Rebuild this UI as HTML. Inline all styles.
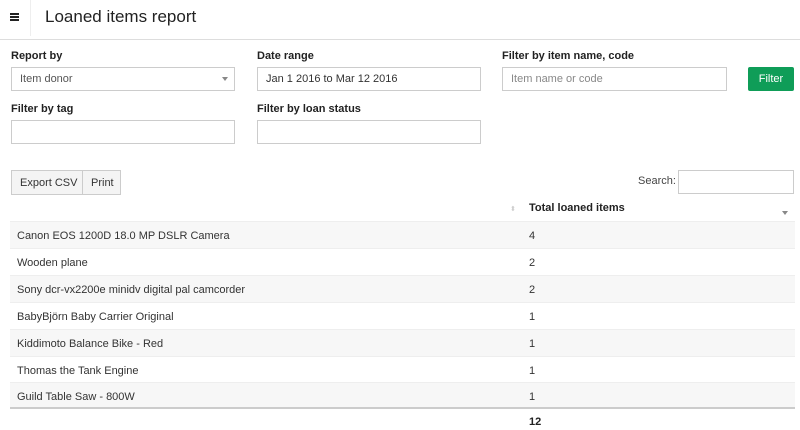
<!DOCTYPE html>
<html><head><style>
*{box-sizing:border-box;margin:0;padding:0}
body{width:800px;height:430px;overflow:hidden;background:#fff;font-family:"Liberation Sans",sans-serif;font-size:11px;color:#333;position:relative}
.a{position:absolute;white-space:nowrap}
.top{left:0;top:0;width:800px;height:40px;border-bottom:1px solid #ddd}
.lbl{font-weight:bold;font-size:11px;color:#222}
.inp{border:1px solid #ccc;height:24px;background:#fff;font-size:11px;padding:5px 8px;color:#555}
.btn{border:1px solid #ccc;background:#f4f4f4;height:25px;font-size:11px;padding:6px 8px;color:#333}
.row{left:10px;width:785px;height:27px;border-top:1px solid #eee;font-size:11px;padding:8px 7px}
.row span{position:absolute;left:519px;top:8px}
.g{background:#f7f7f7}
</style></head><body>
<div class="a top"></div>
<div class="a" style="left:30px;top:0;width:1px;height:36px;background:#eee"></div>
<div class="a" style="left:10px;top:13px;width:9px;height:2px;background:#222;box-shadow:0 3px 0 #222,0 6px 0 #222"></div>
<div class="a" style="left:45px;top:7px;font-size:17px;color:#222">Loaned items report</div>

<div class="a lbl" style="left:11px;top:50px">Report by</div>
<div class="a inp" style="left:11px;top:67px;width:224px">Item donor</div>
<div class="a" style="left:222px;top:77px;border:3px solid transparent;border-top:4px solid #888"></div>
<div class="a lbl" style="left:257px;top:50px">Date range</div>
<div class="a inp" style="left:257px;top:67px;width:224px;color:#333">Jan 1 2016 to Mar 12 2016</div>
<div class="a lbl" style="left:502px;top:50px">Filter by item name, code</div>
<div class="a inp" style="left:502px;top:67px;width:225px;color:#888">Item name or code</div>
<div class="a" style="left:748px;top:67px;width:46px;height:24px;background:#0f9d58;border-radius:2px;color:#fff;font-size:11px;text-align:center;line-height:24px">Filter</div>

<div class="a lbl" style="left:11px;top:103px">Filter by tag</div>
<div class="a inp" style="left:11px;top:120px;width:224px"></div>
<div class="a lbl" style="left:257px;top:103px">Filter by loan status</div>
<div class="a inp" style="left:257px;top:120px;width:224px"></div>

<div class="a btn" style="left:11px;top:170px;width:72px">Export CSV</div>
<div class="a btn" style="left:82px;top:170px;width:39px">Print</div>
<div class="a" style="left:638px;top:175px;color:#444">Search:</div>
<div class="a inp" style="left:678px;top:170px;width:116px"></div>

<div class="a" style="left:510px;top:205px;font-size:7px;color:#ccc">⬍</div>
<div class="a lbl" style="left:529px;top:202px">Total loaned items</div>
<div class="a" style="left:782px;top:211px;border:3px solid transparent;border-top:4px solid #888"></div>

<div class="a row g" style="top:221px">Canon EOS 1200D 18.0 MP DSLR Camera<span>4</span></div>
<div class="a row" style="top:248px">Wooden plane<span>2</span></div>
<div class="a row g" style="top:275px">Sony dcr-vx2200e minidv digital pal camcorder<span>2</span></div>
<div class="a row" style="top:302px">BabyBjörn Baby Carrier Original<span>1</span></div>
<div class="a row g" style="top:329px">Kiddimoto Balance Bike - Red<span>1</span></div>
<div class="a row" style="top:356px">Thomas the Tank Engine<span>1</span></div>
<div class="a row g" style="top:382px">Guild Table Saw - 800W<span>1</span></div>
<div class="a" style="left:10px;top:407px;width:785px;height:2px;background:#ccc"></div>
<div class="a lbl" style="left:529px;top:416px">12</div>
</body></html>
